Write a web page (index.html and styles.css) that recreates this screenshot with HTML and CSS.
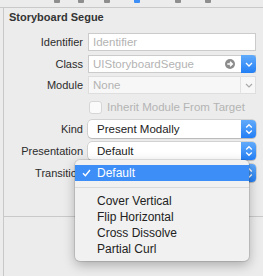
FILE: index.html
```html
<!DOCTYPE html>
<html lang="en">
<head>
  <meta charset="UTF-8">
  <title>Storyboard Segue</title>
  <link rel="stylesheet" href="styles.css">
</head>
<body>
  <!-- Inspector tab bar (cut off at the top) -->
  <div class="toolbar">
    <span class="tab t1"></span>
    <span class="tab t2"></span>
    <span class="tab t3"></span>
    <span class="tab t4 active"></span>
    <span class="tab t5"></span>
    <span class="tab t6"></span>
  </div>

  <div class="inspector">
    <section class="segue">
      <h2>Storyboard Segue</h2>

      <div class="row">
        <label>Identifier</label>
        <div class="field text"><span class="placeholder">Identifier</span></div>
      </div>

      <div class="row row-class">
        <label>Class</label>
        <div class="field text combo">
          <span class="placeholder">UIStoryboardSegue</span>
          <svg class="goto" viewBox="0 0 10 10">
            <circle cx="5" cy="5" r="5" fill="#8c8c8c"></circle>
            <path d="M2.3 5H7.2M5 2.8L7.3 5L5 7.2" stroke="#fff" stroke-width="1.4" fill="none"></path>
          </svg>
          <span class="button down">
            <svg viewBox="0 0 8 5"><path d="M1 1L4 4L7 1" stroke="#fff" stroke-width="1.3" fill="none"></path></svg>
          </span>
        </div>
      </div>

      <div class="row row-module">
        <label>Module</label>
        <div class="field text disabled combo">
          <span class="placeholder">None</span>
          <span class="button plain">
            <svg viewBox="0 0 8 5"><path d="M1 1L4 4L7 1" stroke="#a8a8a8" stroke-width="1.1" fill="none"></path></svg>
          </span>
        </div>
      </div>

      <div class="row row-check">
        <span class="checkbox"></span>
        <span class="check-label">Inherit Module From Target</span>
      </div>

      <div class="row">
        <label>Kind</label>
        <div class="field popup">
          <span class="value">Present Modally</span>
          <span class="stepper">
            <svg viewBox="0 0 8 12"><path d="M1.2 4.5L4 1.7L6.8 4.5M1.2 7.5L4 10.3L6.8 7.5" stroke="#fff" stroke-width="1.3" fill="none"></path></svg>
          </span>
        </div>
      </div>

      <div class="row">
        <label>Presentation</label>
        <div class="field popup">
          <span class="value">Default</span>
          <span class="stepper">
            <svg viewBox="0 0 8 12"><path d="M1.2 4.5L4 1.7L6.8 4.5M1.2 7.5L4 10.3L6.8 7.5" stroke="#fff" stroke-width="1.3" fill="none"></path></svg>
          </span>
        </div>
      </div>

      <div class="row">
        <label>Transition</label>
        <!-- menu is open over this one, so its own title is hidden -->
        <div class="field popup open">
          <span class="value">Default</span>
          <span class="stepper">
            <svg viewBox="0 0 8 12"><path d="M1.2 4.5L4 1.7L6.8 4.5M1.2 7.5L4 10.3L6.8 7.5" stroke="#fff" stroke-width="1.3" fill="none"></path></svg>
          </span>
        </div>
      </div>
    </section>

    <section class="empty"></section>
  </div>

  <!-- Open Transition menu -->
  <div class="menu">
    <div class="item checked">
      <svg class="tick" viewBox="0 0 9 8"><path d="M1 4.3L3.4 6.8L8 1" stroke="#fff" stroke-width="1.4" fill="none"></path></svg>
      Default
    </div>
    <div class="sep"></div>
    <div class="item">Cover Vertical</div>
    <div class="item">Flip Horizontal</div>
    <div class="item">Cross Dissolve</div>
    <div class="item">Partial Curl</div>
  </div>
</body>
</html>
```

FILE: styles.css
```css
/* Base */
body {
  margin: 0;
  width: 263px;
  height: 276px;
  overflow: hidden;
  position: relative;
  background: #ececec;
  font-family: "Liberation Sans", Arial, sans-serif;
  color: #2f2f2f;
}

/* Tab bar */
.toolbar {
  height: 7px;
  border-bottom: 1px solid #c9c9c9;
  display: flex;
  align-items: flex-start;
}

.tab {
  display: block;
  width: 6px;
  height: 3px;
  background: #8e8e8e;
  border-radius: 0 0 1px 1px;
}

.t1 { margin-left: 54px; }
.t2 { margin-left: 18px; }
.t3 { margin-left: 20px; }
.t4 { margin-left: 24px; }
.t5 { margin-left: 35px; }
.t6 { margin-left: 24px; }

.tab.active {
  background: #3d8ef6;
}

/* Inspector */
.inspector {
  margin-left: 3px;
  border-left: 1px solid #c9c9c9;
  height: 268px;
}

.segue {
  height: 208px;
  padding-right: 7px;
  border-bottom: 1px solid #c9c9c9;
}

.segue h2 {
  margin: 0 0 7px;
  padding-left: 5px;
  font-size: 11px;
  line-height: 18px;
  font-weight: bold;
  color: #333;
}

.row {
  display: flex;
  align-items: center;
  height: 18px;
  margin-bottom: 4px;
}

.row-class {
  margin-bottom: 3px;
}

.row-module {
  margin-bottom: 0;
}

.row-check {
  height: 26px;
  margin-bottom: 0;
}

.row label {
  width: 79px;
  margin-right: 5px;
  text-align: right;
  font-size: 11px;
  color: #2b2b2b;
  white-space: nowrap;
}

.field {
  flex: 1;
  height: 18px;
  box-sizing: border-box;
  display: flex;
  align-items: center;
  font-size: 11.5px;
}

/* Text fields */
.field.text {
  background: #fff;
  border: 1px solid #cbcbcb;
  padding-left: 4px;
}

.field.disabled {
  background: #f7f7f7;
  border-color: #dedede;
}

.placeholder {
  color: #b3b3b3;
  white-space: nowrap;
}

.combo {
  position: relative;
}

.goto {
  width: 10px;
  height: 10px;
  margin-left: auto;
  margin-right: 6px;
}

.combo .button {
  width: 15px;
  height: 18px;
  margin: -1px -1px -1px 0;
  display: flex;
  align-items: center;
  justify-content: center;
}

.button.down {
  background: linear-gradient(#62abfb, #237ff5);
  border-radius: 0 4px 4px 0;
}

.button.plain {
  margin-left: auto;
  border-left: 1px solid #e2e2e2;
}

.button svg {
  width: 8px;
  height: 5px;
}

/* Checkbox */
.checkbox {
  width: 11px;
  height: 11px;
  margin-left: 85px;
  background: #fafafa;
  border: 1px solid #d6d6d6;
  border-radius: 3px;
}

.check-label {
  margin-left: 5px;
  font-size: 11.5px;
  color: #b4b4b4;
  white-space: nowrap;
}

/* Pop up buttons */
.field.popup {
  background: #fff;
  border-radius: 4px;
  box-shadow: 0 0 0 0.5px rgba(0, 0, 0, 0.22), 0 1px 1px rgba(0, 0, 0, 0.12);
  padding-left: 9px;
  color: #222;
}

.field.popup.open .value {
  visibility: hidden;
}

.value {
  white-space: nowrap;
}

.stepper {
  margin-left: auto;
  width: 15px;
  height: 100%;
  border-radius: 0 4px 4px 0;
  background: linear-gradient(#62abfb, #237ff5);
  display: flex;
  align-items: center;
  justify-content: center;
}

.stepper svg {
  width: 8px;
  height: 12px;
}

/* Menu */
.menu {
  position: absolute;
  left: 75px;
  top: 160px;
  width: 174px;
  box-sizing: border-box;
  padding: 5px 0 4px;
  background: #f1f1f1;
  border-radius: 5px;
  box-shadow: 0 0 0 1px rgba(0, 0, 0, 0.1), 0 4px 12px rgba(0, 0, 0, 0.28);
  font-size: 12px;
  color: #222;
}

.item {
  position: relative;
  height: 16px;
  line-height: 16px;
  padding-left: 22px;
  white-space: nowrap;
}

.item.checked {
  background: #3d8ef6;
  color: #fff;
}

.tick {
  position: absolute;
  left: 7px;
  top: 4px;
  width: 9px;
  height: 8px;
}

.sep {
  height: 1px;
  margin: 6px 0 5px;
  background: #dadada;
}
```
